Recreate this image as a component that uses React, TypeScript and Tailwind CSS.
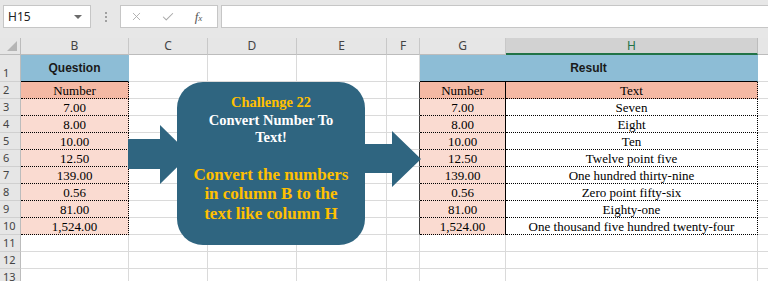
import { X, Check } from 'lucide-react';

const numbers = ['7.00', '8.00', '10.00', '12.50', '139.00', '0.56', '81.00', '1,524.00'];
const words = [
  'Seven',
  'Eight',
  'Ten',
  'Twelve point five',
  'One hundred thirty-nine',
  'Zero point fifty-six',
  'Eighty-one',
  'One thousand five hundred twenty-four',
];

const columns = [
  { id: 'B', w: 'w-[108px]' },
  { id: 'C', w: 'w-[79px]' },
  { id: 'D', w: 'w-[89px]' },
  { id: 'E', w: 'w-[90px]' },
  { id: 'F', w: 'w-[33px]' },
  { id: 'G', w: 'w-[86px]' },
  { id: 'H', w: 'w-[252px]' },
];

const grid = 'border-r border-b border-[#dadada]';
const serif = "font-['Liberation_Serif',serif] text-[13px] leading-[15px] text-black";
const dotted = 'border-r border-b border-black border-dotted';

function Toolbar() {
  return (
    <div className="flex h-[38px] items-start bg-[#e7e7e7] pt-[5px] font-['Noto_Sans',sans-serif]">
      {/* Name box */}
      <div className="ml-[3px] flex h-[23px] w-[88px] items-center justify-between border border-[#c6c6c6] bg-white pl-[4px] pr-[8px] text-[12px] text-[#222]">
        <span>H15</span>
        <span className="h-0 w-0 border-x-[4px] border-t-[4px] border-x-transparent border-t-[#6b6b6b]" />
      </div>

      {/* Grip */}
      <div className="flex h-[23px] w-[29px] flex-col items-center justify-center gap-[2px]">
        <span className="h-[2px] w-[2px] bg-[#a0a0a0]" />
        <span className="h-[2px] w-[2px] bg-[#a0a0a0]" />
        <span className="h-[2px] w-[2px] bg-[#a0a0a0]" />
      </div>

      {/* Cancel / Enter / Function */}
      <div className="flex h-[23px] w-[98px] items-center border border-[#c6c6c6] bg-white">
        <div className="flex w-[31px] justify-center">
          <X className="h-[13px] w-[13px] text-[#a8a8a8]" strokeWidth={1.6} />
        </div>
        <div className="flex w-[31px] justify-center">
          <Check className="h-[14px] w-[14px] text-[#a8a8a8]" strokeWidth={1.8} />
        </div>
        <div className="flex w-[31px] justify-center font-['Liberation_Serif',serif] text-[13px] italic text-[#555]">
          f<span className="mt-[5px] text-[9px]">x</span>
        </div>
      </div>

      {/* Formula input */}
      <div className="ml-[3px] h-[23px] flex-1 border-y border-l border-[#c6c6c6] bg-white" />
    </div>
  );
}

function ColumnHeaders() {
  return (
    <div className="flex h-[17px] bg-[#e6e6e6] font-['Noto_Sans',sans-serif] text-[12px] leading-[16px] text-[#444]">
      <div className="relative w-[21px] border-r border-b border-[#bcbcbc]">
        <span className="absolute right-[3px] bottom-[3px] h-0 w-0 border-b-[10px] border-l-[10px] border-b-[#b5b5b5] border-l-transparent" />
      </div>
      {columns.map((c) =>
        c.id === 'H' ? (
          <div
            key={c.id}
            className={`${c.w} flex justify-center border-r border-b-2 border-r-[#bcbcbc] border-b-[#217346] bg-[#d2d2d2] text-[#217346]`}
          >
            {c.id}
          </div>
        ) : (
          <div key={c.id} className={`${c.w} flex justify-center border-r border-b border-[#c8c8c8] border-b-[#bcbcbc]`}>
            {c.id}
          </div>
        )
      )}
      <div className="flex-1 border-b border-[#bcbcbc]" />
    </div>
  );
}

function RowHeader({ n }: { n: number }) {
  return (
    <div className="flex w-[21px] items-end border-r border-b border-[#d0d0d0] border-r-[#bcbcbc] bg-[#e6e6e6] pb-[1px] pl-[3px] font-['Noto_Sans',sans-serif] text-[11px] leading-[14px] text-[#444]">
      {n}
    </div>
  );
}

function SheetRow({ n }: { n: number }) {
  const height = n === 1 ? 'h-[27px]' : 'h-[17px]';
  const data = n >= 3 && n <= 10 ? n - 3 : -1;

  let colB = <div className={`w-[108px] ${grid}`} />;
  if (n === 1) {
    colB = (
      <div className="flex w-[108px] items-center justify-center border-r border-b border-r-[#8dbdd6] border-b-black bg-[#8dbdd6] font-['Liberation_Sans',sans-serif] text-[12px] font-bold text-[#1a1a1a]">
        Question
      </div>
    );
  } else if (n === 2) {
    colB = <div className={`flex w-[108px] items-end justify-center bg-[#f4b9a4] ${dotted} ${serif}`}>Number</div>;
  } else if (data >= 0) {
    colB = (
      <div className={`flex w-[108px] items-end justify-center bg-[#fadbd1] ${dotted} ${serif}`}>{numbers[data]}</div>
    );
  }

  const inTable = n >= 2 && n <= 10;

  let right = (
    <>
      <div className={`w-[86px] ${grid}`} />
      <div className={`w-[252px] ${grid}`} />
    </>
  );
  if (n === 1) {
    right = (
      <div className="flex w-[338px] items-center justify-center border-r border-b border-r-[#8dbdd6] border-b-black bg-[#8dbdd6] font-['Liberation_Sans',sans-serif] text-[12px] font-bold text-[#1a1a1a]">
        Result
      </div>
    );
  } else if (inTable) {
    right = (
      <>
        <div
          className={`flex w-[86px] items-end justify-center border-r border-b border-black [border-bottom-style:dotted] ${
            n === 2 ? 'bg-[#f4b9a4]' : 'bg-[#fadbd1]'
          } ${serif}`}
        >
          {n === 2 ? 'Number' : numbers[data]}
        </div>
        <div
          className={`flex w-[252px] items-end justify-center ${n === 2 ? 'bg-[#f4b9a4]' : 'bg-white'} ${dotted} ${serif}`}
        >
          {n === 2 ? 'Text' : words[data]}
        </div>
      </>
    );
  }

  return (
    <div className={`flex ${height}`}>
      <RowHeader n={n} />
      {colB}
      <div className={`w-[79px] ${grid}`} />
      <div className={`w-[89px] ${grid}`} />
      <div className={`w-[90px] ${grid}`} />
      <div className={`w-[33px] ${grid} ${inTable ? 'border-r-[#3a3a3a]' : ''}`} />
      {right}
      <div className="flex-1 border-b border-[#dadada]" />
    </div>
  );
}

function ChallengeCallout() {
  return (
    <>
      <svg className="absolute top-0 left-0 h-[281px] w-[768px]" viewBox="0 0 768 281">
        <polygon points="128,139 160,139 160,125 190,154.5 160,184 160,169 128,169" fill="#2f6580" />
        <polygon points="360,144 392,144 392,131 421,159 392,187 392,173 360,173" fill="#2f6580" />
      </svg>
      <div className="absolute top-[82px] left-[177px] flex h-[163px] w-[188px] flex-col items-center rounded-[26px] bg-[#2f6580] pt-[12px] text-center font-['Liberation_Serif',serif] font-bold whitespace-nowrap">
        <div className="text-[14.5px] leading-[17.5px]">
          <div className="text-[#ffc000]">Challenge 22</div>
          <div className="text-white">Convert Number To</div>
          <div className="text-white">Text!</div>
        </div>
        <div className="mt-[18px] text-[17px] leading-[19.5px] text-[#ffc000]">
          <div>Convert the numbers</div>
          <div>in column B to the</div>
          <div>text like column H</div>
        </div>
      </div>
    </>
  );
}

export default function App() {
  const rows = Array.from({ length: 13 }, (_, i) => i + 1);
  return (
    <div className="relative h-[281px] w-[768px] overflow-hidden bg-white">
      <Toolbar />
      <ColumnHeaders />
      {rows.map((n) => (
        <SheetRow key={n} n={n} />
      ))}
      <ChallengeCallout />
    </div>
  );
}
